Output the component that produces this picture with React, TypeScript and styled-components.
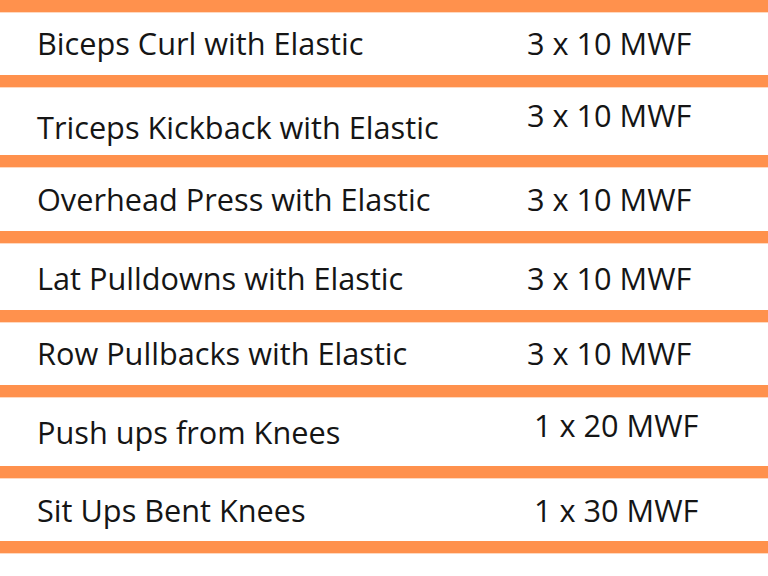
import React from "react";
import styled, { createGlobalStyle } from "styled-components";

const GlobalStyle = createGlobalStyle`
    html, body {
        margin: 0;
        padding: 0;
        background: #ffffff;
    }
    body {
        font-family: "Open Sans", "Liberation Sans", sans-serif;
        color: #151515;
    }
`;

type Exercise = {
    name: string;
    dose: string;
    height: number;
    nameShift: number;
    doseShift: number;
    doseIndent: number;
};

// shifts are in px, relative to the row's centre line
const exercises: Exercise[] = [
    { name: "Biceps Curl with Elastic", dose: "3 x 10 MWF", height: 63, nameShift: -1, doseShift: -1, doseIndent: 0 },
    { name: "Triceps Kickback with Elastic", dose: "3 x 10 MWF", height: 68, nameShift: 6, doseShift: -6, doseIndent: 0 },
    { name: "Overhead Press with Elastic", dose: "3 x 10 MWF", height: 64, nameShift: 0, doseShift: 0, doseIndent: 0 },
    { name: "Lat Pulldowns with Elastic", dose: "3 x 10 MWF", height: 67, nameShift: 1, doseShift: 1, doseIndent: 0 },
    { name: "Row Pullbacks with Elastic", dose: "3 x 10 MWF", height: 63, nameShift: -1, doseShift: -1, doseIndent: 0 },
    { name: "Push ups from Knees", dose: "1 x 20 MWF", height: 69, nameShift: 0, doseShift: -7, doseIndent: 7 },
    { name: "Sit Ups Bent Knees", dose: "1 x 30 MWF", height: 63, nameShift: 0, doseShift: 0, doseIndent: 7 },
];

const App = () => {
    return (
        <>
            <GlobalStyle />
            <Sheet>
                <Divider />
                {exercises.map((ex) => (
                    <React.Fragment key={ex.name}>
                        <Row $height={ex.height}>
                            <Cell $shift={ex.nameShift}>{ex.name}</Cell>
                            <Cell $shift={ex.doseShift} $indent={ex.doseIndent}>
                                {ex.dose}
                            </Cell>
                        </Row>
                        <Divider />
                    </React.Fragment>
                ))}
            </Sheet>
        </>
    );
};

const Sheet = styled.div`
    width: 768px;
    height: 576px;
    display: flex;
    flex-direction: column;
    background: #ffffff;
    overflow: hidden;
`;

const Divider = styled.div`
    flex: none;
    height: 12px;
    background: #ff914d;
    box-shadow: 0 1px 0 #ffd9c0;
`;

const Row = styled.div<{ $height: number }>`
    flex: none;
    height: ${(p) => p.$height}px;
    display: grid;
    grid-template-columns: 490px 1fr;
    align-items: center;
    padding-left: 37px;
`;

const Cell = styled.div<{ $shift: number; $indent?: number }>`
    font-size: 30.7px;
    line-height: 38px;
    white-space: nowrap;
    margin-top: ${(p) => (p.$shift > 0 ? p.$shift * 2 : 0)}px;
    margin-bottom: ${(p) => (p.$shift < 0 ? -p.$shift * 2 : 0)}px;
    padding-left: ${(p) => p.$indent ?? 0}px;
`;

export default App;
